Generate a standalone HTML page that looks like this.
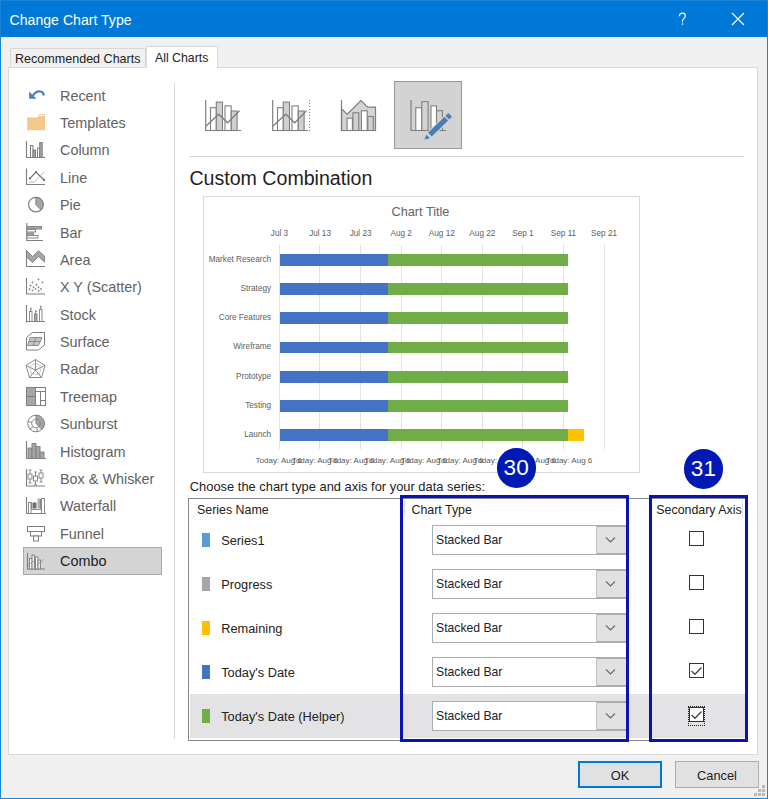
<!DOCTYPE html>
<html><head><meta charset="utf-8"><style>
html,body{margin:0;padding:0;}
body{width:768px;height:799px;position:relative;overflow:hidden;background:#f0f0f0;font-family:"Liberation Sans",sans-serif;}
.t{position:absolute;white-space:nowrap;}
.r{position:absolute;}
</style></head><body>
<div class="r" style="left:0px;top:0px;width:768px;height:37px;background:#0078d7"></div>
<div class="r" style="left:0px;top:0px;width:768px;height:1px;background:#1a84d9"></div>
<div class="r" style="left:0px;top:0px;width:1px;height:799px;background:#1a84d9"></div>
<div class="r" style="left:767px;top:0px;width:1px;height:799px;background:#1a84d9"></div>
<div class="r" style="left:0px;top:798px;width:768px;height:1px;background:#1a84d9"></div>
<span class="t" style="left:9.60px;top:12.66px;font-size:14.1px;line-height:14.1px;color:#ffffff;;transform-origin:0 11.94px;transform:scaleY(1.08);">Change Chart Type</span>
<svg class="r" style="left:0;top:0" width="768" height="37"><path d="M679.4 16.3C679.5 14.2 680.8 13.1 682.4 13.1C684.1 13.1 685.3 14.3 685.3 15.9C685.3 18.1 682.5 18.6 682.5 20.9V22.2" stroke="#fff" stroke-width="1.15" fill="none"/><rect x="681.8" y="23.3" width="1.4" height="1.4" fill="#fff"/></svg>
<svg class="r" style="left:731px;top:12px" width="14" height="14"><path d="M1 1L13 13M13 1L1 13" stroke="#fff" stroke-width="1.1"/></svg>
<div class="r" style="left:10px;top:48px;width:136px;height:20px;background:#f0f0f0;border:1px solid #d9d9d9;border-bottom:none;box-sizing:border-box"></div>
<span class="t" style="left:15.00px;top:52.98px;font-size:12.55px;line-height:12.55px;color:#222;;transform-origin:0 10.62px;transform:scaleY(1.07);">Recommended Charts</span>
<div class="r" style="left:146px;top:46px;width:72px;height:22px;background:#fff;border:1px solid #d9d9d9;border-bottom:none;box-sizing:border-box;z-index:2"></div>
<span class="t" style="left:155.00px;top:51.69px;font-size:12.3px;line-height:12.3px;color:#222;z-index:3;transform-origin:0 10.41px;transform:scaleY(1.07);">All Charts</span>
<div class="r" style="left:8px;top:67px;width:750px;height:688px;background:#fff;border:1px solid #d9d9d9;box-sizing:border-box"></div>
<div class="r" style="left:174px;top:83px;width:1px;height:656px;background:#dadada"></div>
<div class="r" style="left:23px;top:547px;width:139px;height:28px;background:#d4d4d4;border:1px solid #a9a9a9;box-sizing:border-box"></div>
<span class="t" style="left:60.00px;top:88.61px;font-size:14.4px;line-height:14.4px;color:#626262;;transform-origin:0 12.19px;transform:scaleY(1.07);">Recent</span>
<span class="t" style="left:60.00px;top:115.99px;font-size:14.4px;line-height:14.4px;color:#626262;;transform-origin:0 12.19px;transform:scaleY(1.07);">Templates</span>
<span class="t" style="left:60.00px;top:143.37px;font-size:14.4px;line-height:14.4px;color:#626262;;transform-origin:0 12.19px;transform:scaleY(1.07);">Column</span>
<span class="t" style="left:60.00px;top:170.75px;font-size:14.4px;line-height:14.4px;color:#626262;;transform-origin:0 12.19px;transform:scaleY(1.07);">Line</span>
<span class="t" style="left:60.00px;top:198.13px;font-size:14.4px;line-height:14.4px;color:#626262;;transform-origin:0 12.19px;transform:scaleY(1.07);">Pie</span>
<span class="t" style="left:60.00px;top:225.51px;font-size:14.4px;line-height:14.4px;color:#626262;;transform-origin:0 12.19px;transform:scaleY(1.07);">Bar</span>
<span class="t" style="left:60.00px;top:252.89px;font-size:14.4px;line-height:14.4px;color:#626262;;transform-origin:0 12.19px;transform:scaleY(1.07);">Area</span>
<span class="t" style="left:60.00px;top:280.27px;font-size:14.4px;line-height:14.4px;color:#626262;;transform-origin:0 12.19px;transform:scaleY(1.07);">X Y (Scatter)</span>
<span class="t" style="left:60.00px;top:307.65px;font-size:14.4px;line-height:14.4px;color:#626262;;transform-origin:0 12.19px;transform:scaleY(1.07);">Stock</span>
<span class="t" style="left:60.00px;top:335.03px;font-size:14.4px;line-height:14.4px;color:#626262;;transform-origin:0 12.19px;transform:scaleY(1.07);">Surface</span>
<span class="t" style="left:60.00px;top:362.41px;font-size:14.4px;line-height:14.4px;color:#626262;;transform-origin:0 12.19px;transform:scaleY(1.07);">Radar</span>
<span class="t" style="left:60.00px;top:389.79px;font-size:14.4px;line-height:14.4px;color:#626262;;transform-origin:0 12.19px;transform:scaleY(1.07);">Treemap</span>
<span class="t" style="left:60.00px;top:417.17px;font-size:14.4px;line-height:14.4px;color:#626262;;transform-origin:0 12.19px;transform:scaleY(1.07);">Sunburst</span>
<span class="t" style="left:60.00px;top:444.55px;font-size:14.4px;line-height:14.4px;color:#626262;;transform-origin:0 12.19px;transform:scaleY(1.07);">Histogram</span>
<span class="t" style="left:60.00px;top:471.93px;font-size:14.4px;line-height:14.4px;color:#626262;;transform-origin:0 12.19px;transform:scaleY(1.07);">Box &amp; Whisker</span>
<span class="t" style="left:60.00px;top:499.31px;font-size:14.4px;line-height:14.4px;color:#626262;;transform-origin:0 12.19px;transform:scaleY(1.07);">Waterfall</span>
<span class="t" style="left:60.00px;top:526.69px;font-size:14.4px;line-height:14.4px;color:#626262;;transform-origin:0 12.19px;transform:scaleY(1.07);">Funnel</span>
<span class="t" style="left:60.00px;top:554.07px;font-size:14.4px;line-height:14.4px;color:#222;;transform-origin:0 12.19px;transform:scaleY(1.07);">Combo</span>
<svg class="r" style="left:0;top:0;z-index:1" width="768" height="799"><path d="M32.5 96.5C34.5 92.5 38 91.2 40.5 91.5C42.5 91.8 43.6 93.5 43.8 95.5" stroke="#4a7ebb" stroke-width="2.2" fill="none"/><path d="M29.2 91.5L29.2 98.8L36.5 98.8Z" fill="#4a7ebb"/><path d="M27.2 117.5H37.5L39 114.3H45V130.2H27.2Z" fill="#f2c98a"/><path d="M38.5 115.6H44" stroke="#fff" stroke-width="1"/><path d="M26.5 141V158M26 157.5H45" stroke="#7f7f7f" stroke-width="1.1" fill="none"/><rect x="30.5" y="145.5" width="2.5" height="12" fill="#fff" stroke="#7f7f7f" stroke-width="1"/><rect x="33" y="150" width="2.5" height="7.5" fill="#a6a6a6" stroke="#7f7f7f" stroke-width="1"/><rect x="37.5" y="148" width="2.2" height="9.5" fill="#fff" stroke="#7f7f7f" stroke-width="1"/><rect x="39.7" y="142.5" width="2.5" height="15" fill="#a6a6a6" stroke="#7f7f7f" stroke-width="1"/><path d="M26.5 168.5V185M26 184.5H45" stroke="#7f7f7f" stroke-width="1.1" fill="none"/><path d="M30 178.3L36 172L44 180" stroke="#6f6f6f" stroke-width="1.2" fill="none"/><path d="M29.5 182L34.5 182L44 172" stroke="#b0b0b0" stroke-width="0.9" fill="none"/><rect x="29" y="177.3" width="2" height="2" fill="#6f6f6f"/><rect x="35" y="171" width="2" height="2" fill="#6f6f6f"/><rect x="43" y="179" width="2" height="2" fill="#6f6f6f"/><circle cx="35.9" cy="204.6" r="7.3" fill="#fff" stroke="#7f7f7f" stroke-width="1.2"/><path d="M35.9 204.6V197.3A7.3 7.3 0 0 1 41 209.8Z" fill="#a6a6a6" stroke="#7f7f7f" stroke-width="1"/><path d="M26.8 223V241M26.3 240.5H43" stroke="#7f7f7f" stroke-width="1.1" fill="none"/><rect x="27" y="226.5" width="14.5" height="2.5" fill="#a6a6a6" stroke="#7f7f7f" stroke-width="0.9"/><rect x="27" y="229.5" width="8.5" height="2.5" fill="#fff" stroke="#7f7f7f" stroke-width="0.9"/><rect x="27" y="233" width="6.5" height="2.5" fill="#a6a6a6" stroke="#7f7f7f" stroke-width="0.9"/><rect x="27" y="235.5" width="11" height="2.5" fill="#fff" stroke="#7f7f7f" stroke-width="0.9"/><path d="M26.5 250.5L32.5 256.5L38.5 250.8L44.5 256V262L38.5 256.5L32.5 262.5L26.5 257Z" fill="#a6a6a6" stroke="#7f7f7f" stroke-width="0.9"/><path d="M26.5 250V266.5M26 266.5H45" stroke="#7f7f7f" stroke-width="1.1" fill="none"/><path d="M26.5 278V294.5M26 294H45" stroke="#7f7f7f" stroke-width="1.1" fill="none"/><path d="M37.5 279.5H39.5M38.5 278.5V280.5" stroke="#8a8a8a" stroke-width="0.9"/><path d="M31.5 282.5H33.5M32.5 281.5V283.5" stroke="#8a8a8a" stroke-width="0.9"/><path d="M41.5 282.3H43.5M42.5 281.3V283.3" stroke="#8a8a8a" stroke-width="0.9"/><path d="M29.5 285.5H31.5M30.5 284.5V286.5" stroke="#8a8a8a" stroke-width="0.9"/><path d="M35.5 284.8H37.5M36.5 283.8V285.8" stroke="#8a8a8a" stroke-width="0.9"/><path d="M32.5 287.3H34.5M33.5 286.3V288.3" stroke="#8a8a8a" stroke-width="0.9"/><path d="M37.5 287.3H39.5M38.5 286.3V288.3" stroke="#8a8a8a" stroke-width="0.9"/><path d="M28.5 289.2H30.5M29.5 288.2V290.2" stroke="#8a8a8a" stroke-width="0.9"/><path d="M34.5 289H36.5M35.5 288V290" stroke="#8a8a8a" stroke-width="0.9"/><path d="M40 289H42M41 288V290" stroke="#8a8a8a" stroke-width="0.9"/><path d="M31.5 290.5H33.5M32.5 289.5V291.5" stroke="#8a8a8a" stroke-width="0.9"/><path d="M37.5 291H39.5M38.5 290V292" stroke="#8a8a8a" stroke-width="0.9"/><path d="M26.5 305V322.5M26 321.5H45" stroke="#7f7f7f" stroke-width="1.1" fill="none"/><rect x="29.5" y="311.5" width="2.5" height="10.0" fill="#fff" stroke="#7f7f7f" stroke-width="0.9"/><path d="M30.7 307.5V311.5M30.7 309.0H32.1" stroke="#7f7f7f" stroke-width="0.9"/><rect x="34.5" y="314" width="2.5" height="7.5" fill="#a6a6a6" stroke="#7f7f7f" stroke-width="0.9"/><path d="M35.7 310V314M35.7 311.5H37.1" stroke="#7f7f7f" stroke-width="0.9"/><rect x="39.5" y="309.5" width="2.5" height="12.0" fill="#fff" stroke="#7f7f7f" stroke-width="0.9"/><path d="M40.7 305.5V309.5M40.7 307.0H42.1" stroke="#7f7f7f" stroke-width="0.9"/><path d="M32.5 332.5H44.5V345L38.5 350H26.5V337.5Z" fill="#fff" stroke="#7f7f7f" stroke-width="1"/><path d="M30 337.5H42L38.5 345.5H27.5Z" fill="#c4c4c4" stroke="#7f7f7f" stroke-width="0.8"/><path d="M36 337.5L33 345.5M28.7 341.5H40.2" stroke="#7f7f7f" stroke-width="0.8"/><path d="M35.5 359.5L45 365.5L41.5 377.5H29.5L26 365.5Z" fill="none" stroke="#7f7f7f" stroke-width="0.9"/><path d="M35.5 359.5V370M35.5 370L45 365.5M35.5 370L41.5 377.5M35.5 370L29.5 377.5M35.5 370L26 365.5" stroke="#7f7f7f" stroke-width="0.9"/><path d="M35.5 363L41.5 366.5L39.5 374H31.5L29.5 366.5Z" fill="none" stroke="#b0b0b0" stroke-width="0.7"/><rect x="26.5" y="387.5" width="19" height="18" fill="#fff" stroke="#7f7f7f" stroke-width="1"/><rect x="26.5" y="387.5" width="9" height="18" fill="#a6a6a6" stroke="#7f7f7f" stroke-width="1"/><path d="M26.5 396.5H35.5M35.5 391.5H45.5M40.5 391.5V405.5M40.5 400.5H45.5" stroke="#7f7f7f" stroke-width="1"/><circle cx="36" cy="423.5" r="8.3" fill="#fff" stroke="#7f7f7f" stroke-width="1"/><path d="M36 415.2A8.3 8.3 0 0 1 41.8 429.4L36 423.5Z" fill="#a6a6a6" stroke="#7f7f7f" stroke-width="0.9"/><circle cx="36" cy="423.5" r="4.3" fill="none" stroke="#7f7f7f" stroke-width="0.9"/><path d="M28 421.5L32 422.5M30 429L33.5 426.5M37 431.8L37 427.5" stroke="#7f7f7f" stroke-width="0.9"/><path d="M26.5 441V459M26 458.5H46" stroke="#7f7f7f" stroke-width="1.1" fill="none"/><rect x="28" y="448" width="4" height="10.5" fill="#a6a6a6" stroke="#7f7f7f" stroke-width="0.9"/><rect x="32" y="443.5" width="4" height="15.0" fill="#a6a6a6" stroke="#7f7f7f" stroke-width="0.9"/><rect x="36" y="446.5" width="4" height="12.0" fill="#a6a6a6" stroke="#7f7f7f" stroke-width="0.9"/><rect x="40" y="452" width="4" height="6.5" fill="#a6a6a6" stroke="#7f7f7f" stroke-width="0.9"/><path d="M26.5 469V486.5M26 486H45" stroke="#7f7f7f" stroke-width="1.1" fill="none"/><path d="M30 470V483M28.5 470H31.5M28.5 483H31.5" stroke="#7f7f7f" stroke-width="0.9"/><rect x="28" y="474" width="4" height="5" fill="#fff" stroke="#7f7f7f" stroke-width="0.9"/><path d="M35.5 472V485M34.0 472H37.0M34.0 485H37.0" stroke="#7f7f7f" stroke-width="0.9"/><rect x="33.5" y="476" width="4" height="5" fill="#fff" stroke="#7f7f7f" stroke-width="0.9"/><path d="M41 470V482M39.5 470H42.5M39.5 482H42.5" stroke="#7f7f7f" stroke-width="0.9"/><rect x="39" y="473" width="4" height="5" fill="#fff" stroke="#7f7f7f" stroke-width="0.9"/><path d="M26.5 497V514M26 513.5H46" stroke="#7f7f7f" stroke-width="1.1" fill="none"/><rect x="28.5" y="502.5" width="2.5" height="11" fill="#fff" stroke="#7f7f7f" stroke-width="0.9"/><rect x="32.5" y="502.5" width="4" height="6" fill="#6e6e6e"/><rect x="37.5" y="498.5" width="3" height="10" fill="#b0b0b0"/><path d="M31.5 502.5V509.5H40.5V499" stroke="#7f7f7f" stroke-width="0.9" fill="none"/><rect x="41.5" y="498.5" width="3" height="15" fill="#fff" stroke="#7f7f7f" stroke-width="0.9"/><rect x="27.5" y="526.5" width="17" height="5" fill="#fff" stroke="#7f7f7f" stroke-width="1"/><rect x="30.5" y="531.5" width="11" height="4.5" fill="#fff" stroke="#7f7f7f" stroke-width="1"/><rect x="33.5" y="536" width="5" height="5" fill="#fff" stroke="#7f7f7f" stroke-width="1"/><path d="M27.5 553V569.5M27 569H45" stroke="#7f7f7f" stroke-width="1.1" fill="none"/><rect x="29.5" y="558.5" width="2.5" height="10.5" fill="#fff" stroke="#7f7f7f" stroke-width="0.9"/><rect x="32" y="555" width="2.5" height="14" fill="#e8e8e8" stroke="#7f7f7f" stroke-width="0.9"/><rect x="35.5" y="557" width="2.5" height="12" fill="#fff" stroke="#7f7f7f" stroke-width="0.9"/><rect x="38" y="560" width="2.5" height="9" fill="#e8e8e8" stroke="#7f7f7f" stroke-width="0.9"/><path d="M28 566L33 561L37 565L44.5 559" stroke="#7f7f7f" stroke-width="0.9" fill="none" stroke-dasharray="1.5 1"/></svg>
<div class="r" style="left:394px;top:81px;width:68px;height:68px;background:#d3d3d3;border:1px solid #999;box-sizing:border-box"></div>
<svg class="r" style="left:0;top:0;z-index:1" width="768" height="799"><path d="M205.7 100V131M205.2 130.5H241.2" stroke="#7f7f7f" stroke-width="1.2" fill="none"/><rect x="210.5" y="107.7" width="5.8" height="22.799999999999997" fill="#fff" stroke="#7f7f7f" stroke-width="1.1"/><rect x="216.29999999999998" y="102.1" width="6.2" height="28.400000000000006" fill="#d0d0d0" stroke="#7f7f7f" stroke-width="1.1"/><rect x="225.0" y="105.9" width="6.2" height="24.599999999999994" fill="#fff" stroke="#7f7f7f" stroke-width="1.1"/><rect x="231.29999999999998" y="111.0" width="5.8" height="19.5" fill="#d0d0d0" stroke="#7f7f7f" stroke-width="1.1"/><path d="M205.2 126.7L218.79999999999998 114.2L227.7 122.8L239.5 110.7" stroke="#7f7f7f" stroke-width="1.3" fill="none"/><path d="M272.7 100V131M272.2 130.5H308.2" stroke="#7f7f7f" stroke-width="1.2" fill="none"/><rect x="277.5" y="107.7" width="5.8" height="22.799999999999997" fill="#fff" stroke="#7f7f7f" stroke-width="1.1"/><rect x="283.3" y="102.1" width="6.2" height="28.400000000000006" fill="#d0d0d0" stroke="#7f7f7f" stroke-width="1.1"/><rect x="292.0" y="105.9" width="6.2" height="24.599999999999994" fill="#fff" stroke="#7f7f7f" stroke-width="1.1"/><rect x="298.3" y="111.0" width="5.8" height="19.5" fill="#d0d0d0" stroke="#7f7f7f" stroke-width="1.1"/><path d="M272.2 126.7L285.8 114.2L294.7 122.8L306.5 110.7" stroke="#7f7f7f" stroke-width="1.3" fill="none"/><path d="M309.59999999999997 100V131" stroke="#7f7f7f" stroke-width="1" stroke-dasharray="1 2" fill="none"/><path d="M341.5 108.75L347.3 114.2L360.9 100.5L367.7 107.2L375.5 107.2L375.5 130.5L341.5 130.5Z" fill="#d4d4d4" stroke="#7f7f7f" stroke-width="1.2"/><path d="M341.5 100V131M341 130.5H376" stroke="#7f7f7f" stroke-width="1.2" fill="none"/><rect x="347.1" y="118.2" width="5.3" height="12.299999999999997" fill="#fff" stroke="#7f7f7f" stroke-width="1.1"/><rect x="352.9" y="112.8" width="5.9" height="17.700000000000003" fill="#d0d0d0" stroke="#7f7f7f" stroke-width="1.1"/><rect x="361.4" y="110.8" width="5.8" height="19.700000000000003" fill="#fff" stroke="#7f7f7f" stroke-width="1.1"/><rect x="367.8" y="116.5" width="5.5" height="14" fill="#d0d0d0" stroke="#7f7f7f" stroke-width="1.1"/><path d="M411 100V131M410.5 130.5H446" stroke="#7f7f7f" stroke-width="1.2" fill="none"/><rect x="415.8" y="107.75" width="6" height="22.75" fill="#fff" stroke="#7f7f7f" stroke-width="1.1"/><rect x="421.8" y="101.7" width="6.3" height="28.799999999999997" fill="#d3d3d3" stroke="#7f7f7f" stroke-width="1.1"/><rect x="431.0" y="105.9" width="5.5" height="24.599999999999994" fill="#fff" stroke="#7f7f7f" stroke-width="1.1"/><rect x="436.5" y="110.7" width="5.9" height="19.799999999999997" fill="#d3d3d3" stroke="#7f7f7f" stroke-width="1.1"/><path d="M429.9 134.6L446.35 118.7" stroke="#d3d3d3" stroke-width="7.5" fill="none"/><path d="M429.9 134.6L446.35 118.7" stroke="#4a7ebb" stroke-width="5.2" fill="none"/><path d="M447.3 117.6L450.2 114.8" stroke="#4a7ebb" stroke-width="5.2" fill="none"/><path d="M426.3 134.6L429.9 138.2L424.6 139.6Z" fill="#4a7ebb"/></svg>
<div class="r" style="left:190px;top:156px;width:554px;height:1px;background:#d3d3d3"></div>
<span class="t" style="left:189.40px;top:168.91px;font-size:19.6px;line-height:19.6px;color:#222;;">Custom Combination</span>
<div class="r" style="left:203px;top:196px;width:437px;height:277px;background:#fff;border:1px solid #d9d9d9;box-sizing:border-box"></div>
<span class="t" style="left:420.50px;top:206.35px;font-size:12.7px;line-height:12.7px;color:#646464;;transform:translateX(-50%);">Chart Title</span>
<div class="r" style="left:279px;top:245px;width:1px;height:204px;background:#e2e2e2"></div>
<span class="t" style="left:279.50px;top:230.46px;font-size:8.2px;line-height:8.2px;color:#5e5e5e;;transform:translateX(-50%);">Jul 3</span>
<div class="r" style="left:319px;top:245px;width:1px;height:204px;background:#e2e2e2"></div>
<span class="t" style="left:320.07px;top:230.46px;font-size:8.2px;line-height:8.2px;color:#5e5e5e;;transform:translateX(-50%);">Jul 13</span>
<div class="r" style="left:360px;top:245px;width:1px;height:204px;background:#e2e2e2"></div>
<span class="t" style="left:360.64px;top:230.46px;font-size:8.2px;line-height:8.2px;color:#5e5e5e;;transform:translateX(-50%);">Jul 23</span>
<div class="r" style="left:401px;top:245px;width:1px;height:204px;background:#e2e2e2"></div>
<span class="t" style="left:401.21px;top:230.46px;font-size:8.2px;line-height:8.2px;color:#5e5e5e;;transform:translateX(-50%);">Aug 2</span>
<div class="r" style="left:441px;top:245px;width:1px;height:204px;background:#e2e2e2"></div>
<span class="t" style="left:441.78px;top:230.46px;font-size:8.2px;line-height:8.2px;color:#5e5e5e;;transform:translateX(-50%);">Aug 12</span>
<div class="r" style="left:482px;top:245px;width:1px;height:204px;background:#e2e2e2"></div>
<span class="t" style="left:482.35px;top:230.46px;font-size:8.2px;line-height:8.2px;color:#5e5e5e;;transform:translateX(-50%);">Aug 22</span>
<div class="r" style="left:522px;top:245px;width:1px;height:204px;background:#e2e2e2"></div>
<span class="t" style="left:522.92px;top:230.46px;font-size:8.2px;line-height:8.2px;color:#5e5e5e;;transform:translateX(-50%);">Sep 1</span>
<div class="r" style="left:563px;top:245px;width:1px;height:204px;background:#e2e2e2"></div>
<span class="t" style="left:563.49px;top:230.46px;font-size:8.2px;line-height:8.2px;color:#5e5e5e;;transform:translateX(-50%);">Sep 11</span>
<div class="r" style="left:604px;top:245px;width:1px;height:204px;background:#e2e2e2"></div>
<span class="t" style="left:604.06px;top:230.46px;font-size:8.2px;line-height:8.2px;color:#5e5e5e;;transform:translateX(-50%);">Sep 21</span>
<div class="r" style="left:280px;top:253.8px;width:108px;height:11.8px;background:#4472c4"></div>
<div class="r" style="left:388px;top:253.8px;width:180px;height:11.8px;background:#70ad47"></div>
<span class="t" style="left:271.10px;top:255.66px;font-size:8.2px;line-height:8.2px;color:#5e5e5e;;transform:translateX(-100%);">Market Research</span>
<div class="r" style="left:280px;top:283.1px;width:108px;height:11.8px;background:#4472c4"></div>
<div class="r" style="left:388px;top:283.1px;width:180px;height:11.8px;background:#70ad47"></div>
<span class="t" style="left:271.10px;top:284.91px;font-size:8.2px;line-height:8.2px;color:#5e5e5e;;transform:translateX(-100%);">Strategy</span>
<div class="r" style="left:280px;top:312.3px;width:108px;height:11.8px;background:#4472c4"></div>
<div class="r" style="left:388px;top:312.3px;width:180px;height:11.8px;background:#70ad47"></div>
<span class="t" style="left:271.10px;top:314.16px;font-size:8.2px;line-height:8.2px;color:#5e5e5e;;transform:translateX(-100%);">Core Features</span>
<div class="r" style="left:280px;top:341.6px;width:108px;height:11.8px;background:#4472c4"></div>
<div class="r" style="left:388px;top:341.6px;width:180px;height:11.8px;background:#70ad47"></div>
<span class="t" style="left:271.10px;top:343.41px;font-size:8.2px;line-height:8.2px;color:#5e5e5e;;transform:translateX(-100%);">Wireframe</span>
<div class="r" style="left:280px;top:370.8px;width:108px;height:11.8px;background:#4472c4"></div>
<div class="r" style="left:388px;top:370.8px;width:180px;height:11.8px;background:#70ad47"></div>
<span class="t" style="left:271.10px;top:372.66px;font-size:8.2px;line-height:8.2px;color:#5e5e5e;;transform:translateX(-100%);">Prototype</span>
<div class="r" style="left:280px;top:400.1px;width:108px;height:11.8px;background:#4472c4"></div>
<div class="r" style="left:388px;top:400.1px;width:180px;height:11.8px;background:#70ad47"></div>
<span class="t" style="left:271.10px;top:401.91px;font-size:8.2px;line-height:8.2px;color:#5e5e5e;;transform:translateX(-100%);">Testing</span>
<div class="r" style="left:280px;top:429.3px;width:108px;height:11.8px;background:#4472c4"></div>
<div class="r" style="left:388px;top:429.3px;width:180px;height:11.8px;background:#70ad47"></div>
<span class="t" style="left:271.10px;top:431.16px;font-size:8.2px;line-height:8.2px;color:#5e5e5e;;transform:translateX(-100%);">Launch</span>
<div class="r" style="left:568px;top:429.3px;width:16px;height:11.8px;background:#ffc000"></div>
<span class="t" style="left:255.60px;top:456.63px;font-size:8px;line-height:8px;color:#595959;;">Today: Aug 6</span>
<span class="t" style="left:291.90px;top:456.63px;font-size:8px;line-height:8px;color:#595959;;">Today: Aug 6</span>
<span class="t" style="left:328.20px;top:456.63px;font-size:8px;line-height:8px;color:#595959;;">Today: Aug 6</span>
<span class="t" style="left:364.50px;top:456.63px;font-size:8px;line-height:8px;color:#595959;;">Today: Aug 6</span>
<span class="t" style="left:400.80px;top:456.63px;font-size:8px;line-height:8px;color:#595959;;">Today: Aug 6</span>
<span class="t" style="left:437.10px;top:456.63px;font-size:8px;line-height:8px;color:#595959;;">Today: Aug 6</span>
<span class="t" style="left:473.40px;top:456.63px;font-size:8px;line-height:8px;color:#595959;;">Today: Aug 6</span>
<span class="t" style="left:509.70px;top:456.63px;font-size:8px;line-height:8px;color:#595959;;">Today: Aug 6</span>
<span class="t" style="left:546.00px;top:456.63px;font-size:8px;line-height:8px;color:#595959;;">Today: Aug 6</span>
<span class="t" style="left:189.80px;top:481.38px;font-size:12.9px;line-height:12.9px;color:#222;;">Choose the chart type and axis for your data series:</span>
<div class="r" style="left:188px;top:498px;width:558px;height:243px;background:#fff;border:1px solid #828790;box-sizing:border-box"></div>
<div class="r" style="left:190px;top:694px;width:556px;height:44px;background:#e3e3e5"></div>
<span class="t" style="left:197.00px;top:503.60px;font-size:12.4px;line-height:12.4px;color:#222;;transform-origin:0 10.50px;transform:scaleY(1.1);">Series Name</span>
<span class="t" style="left:411.50px;top:503.60px;font-size:12.4px;line-height:12.4px;color:#222;;transform-origin:0 10.50px;transform:scaleY(1.1);">Chart Type</span>
<span class="t" style="left:656.30px;top:503.60px;font-size:12.4px;line-height:12.4px;color:#222;;transform-origin:0 10.50px;transform:scaleY(1.1);">Secondary Axis</span>
<div class="r" style="left:404px;top:500px;width:1px;height:17px;background:#e5e5e5"></div>
<div class="r" style="left:742px;top:500px;width:1px;height:17px;background:#e5e5e5"></div>
<div class="r" style="left:202px;top:533px;width:8px;height:14px;background:#5b9bd5"></div>
<span class="t" style="left:221.20px;top:534.76px;font-size:12.8px;line-height:12.8px;color:#222;;transform-origin:0 10.84px;transform:scaleY(1.07);">Series1</span>
<div class="r" style="left:432px;top:525px;width:196px;height:30px;background:#fff;border:1px solid #adadad;box-sizing:border-box"></div>
<div class="r" style="left:596px;top:525px;width:31px;height:30px;background:#e1e1e1;border-top:2px solid #acacac;border-bottom:2px solid #acacac;border-left:1px solid #c2c2c2;box-sizing:border-box"></div>
<svg class="r" style="left:605px;top:536px" width="11" height="8"><path d="M1 1.5L5.5 6L10 1.5" stroke="#6a6a6a" stroke-width="1.15" fill="none"/></svg>
<span class="t" style="left:436.00px;top:534.07px;font-size:12.2px;line-height:12.2px;color:#222;;transform-origin:0 10.33px;transform:scaleY(1.06);">Stacked Bar</span>
<div class="r" style="left:689px;top:531px;width:15px;height:15px;background:#fff;border:1px solid #333;box-sizing:border-box"></div>
<div class="r" style="left:202px;top:577px;width:8px;height:14px;background:#a5a5a5"></div>
<span class="t" style="left:221.20px;top:578.76px;font-size:12.8px;line-height:12.8px;color:#222;;transform-origin:0 10.84px;transform:scaleY(1.07);">Progress</span>
<div class="r" style="left:432px;top:569px;width:196px;height:30px;background:#fff;border:1px solid #adadad;box-sizing:border-box"></div>
<div class="r" style="left:596px;top:569px;width:31px;height:30px;background:#e1e1e1;border-top:2px solid #acacac;border-bottom:2px solid #acacac;border-left:1px solid #c2c2c2;box-sizing:border-box"></div>
<svg class="r" style="left:605px;top:580px" width="11" height="8"><path d="M1 1.5L5.5 6L10 1.5" stroke="#6a6a6a" stroke-width="1.15" fill="none"/></svg>
<span class="t" style="left:436.00px;top:578.07px;font-size:12.2px;line-height:12.2px;color:#222;;transform-origin:0 10.33px;transform:scaleY(1.06);">Stacked Bar</span>
<div class="r" style="left:689px;top:575px;width:15px;height:15px;background:#fff;border:1px solid #333;box-sizing:border-box"></div>
<div class="r" style="left:202px;top:621px;width:8px;height:14px;background:#ffc000"></div>
<span class="t" style="left:221.20px;top:622.76px;font-size:12.8px;line-height:12.8px;color:#222;;transform-origin:0 10.84px;transform:scaleY(1.07);">Remaining</span>
<div class="r" style="left:432px;top:613px;width:196px;height:30px;background:#fff;border:1px solid #adadad;box-sizing:border-box"></div>
<div class="r" style="left:596px;top:613px;width:31px;height:30px;background:#e1e1e1;border-top:2px solid #acacac;border-bottom:2px solid #acacac;border-left:1px solid #c2c2c2;box-sizing:border-box"></div>
<svg class="r" style="left:605px;top:624px" width="11" height="8"><path d="M1 1.5L5.5 6L10 1.5" stroke="#6a6a6a" stroke-width="1.15" fill="none"/></svg>
<span class="t" style="left:436.00px;top:622.07px;font-size:12.2px;line-height:12.2px;color:#222;;transform-origin:0 10.33px;transform:scaleY(1.06);">Stacked Bar</span>
<div class="r" style="left:689px;top:619px;width:15px;height:15px;background:#fff;border:1px solid #333;box-sizing:border-box"></div>
<div class="r" style="left:202px;top:665px;width:8px;height:14px;background:#4472c4"></div>
<span class="t" style="left:221.20px;top:666.76px;font-size:12.8px;line-height:12.8px;color:#222;;transform-origin:0 10.84px;transform:scaleY(1.07);">Today's Date</span>
<div class="r" style="left:432px;top:657px;width:196px;height:30px;background:#fff;border:1px solid #adadad;box-sizing:border-box"></div>
<div class="r" style="left:596px;top:657px;width:31px;height:30px;background:#e1e1e1;border-top:2px solid #acacac;border-bottom:2px solid #acacac;border-left:1px solid #c2c2c2;box-sizing:border-box"></div>
<svg class="r" style="left:605px;top:668px" width="11" height="8"><path d="M1 1.5L5.5 6L10 1.5" stroke="#6a6a6a" stroke-width="1.15" fill="none"/></svg>
<span class="t" style="left:436.00px;top:666.07px;font-size:12.2px;line-height:12.2px;color:#222;;transform-origin:0 10.33px;transform:scaleY(1.06);">Stacked Bar</span>
<div class="r" style="left:689px;top:663px;width:15px;height:15px;background:#fff;border:1px solid #333;box-sizing:border-box"></div>
<svg class="r" style="left:689px;top:663px" width="15" height="15"><path d="M2.5 8L6 11.3L12.5 4.5" stroke="#444" stroke-width="1.3" fill="none"/></svg>
<div class="r" style="left:202px;top:709px;width:8px;height:14px;background:#70ad47"></div>
<span class="t" style="left:221.20px;top:710.76px;font-size:12.8px;line-height:12.8px;color:#222;;transform-origin:0 10.84px;transform:scaleY(1.07);">Today's Date (Helper)</span>
<div class="r" style="left:432px;top:701px;width:196px;height:30px;background:#fff;border:1px solid #adadad;box-sizing:border-box"></div>
<div class="r" style="left:596px;top:701px;width:31px;height:30px;background:#e1e1e1;border-top:2px solid #acacac;border-bottom:2px solid #acacac;border-left:1px solid #c2c2c2;box-sizing:border-box"></div>
<svg class="r" style="left:605px;top:712px" width="11" height="8"><path d="M1 1.5L5.5 6L10 1.5" stroke="#6a6a6a" stroke-width="1.15" fill="none"/></svg>
<span class="t" style="left:436.00px;top:710.07px;font-size:12.2px;line-height:12.2px;color:#222;;transform-origin:0 10.33px;transform:scaleY(1.06);">Stacked Bar</span>
<div class="r" style="left:689px;top:707px;width:15px;height:15px;background:#fff;border:1px solid #333;box-sizing:border-box"></div>
<svg class="r" style="left:689px;top:707px" width="15" height="15"><path d="M2.5 8L6 11.3L12.5 4.5" stroke="#444" stroke-width="1.3" fill="none"/></svg>
<div class="r" style="left:688px;top:706px;width:17px;height:20px;border:1px dotted #222;box-sizing:border-box"></div>
<div class="r" style="left:400px;top:495px;width:229px;height:247px;border:3px solid #0a14b4;box-sizing:border-box;z-index:5"></div>
<div class="r" style="left:649px;top:495px;width:99px;height:247px;border:3px solid #0a14b4;box-sizing:border-box;z-index:5"></div>
<div class="r" style="left:496.5px;top:448px;width:39.5px;height:39.5px;background:#0019b4;border-radius:50%;z-index:6"></div>
<span class="t" style="left:516.20px;top:457.07px;font-size:22.6px;line-height:22.6px;color:#fff;z-index:7;transform:translateX(-50%);">30</span>
<div class="r" style="left:683.7px;top:449.3px;width:39.5px;height:39.5px;background:#0019b4;border-radius:50%;z-index:6"></div>
<span class="t" style="left:703.40px;top:458.27px;font-size:22.6px;line-height:22.6px;color:#fff;z-index:7;transform:translateX(-50%);">31</span>
<div class="r" style="left:762px;top:785px;width:3px;height:3px;background:#b8b8b8"></div>
<div class="r" style="left:758px;top:789px;width:3px;height:3px;background:#b8b8b8"></div>
<div class="r" style="left:762px;top:789px;width:3px;height:3px;background:#b8b8b8"></div>
<div class="r" style="left:754px;top:793px;width:3px;height:3px;background:#b8b8b8"></div>
<div class="r" style="left:758px;top:793px;width:3px;height:3px;background:#b8b8b8"></div>
<div class="r" style="left:762px;top:793px;width:3px;height:3px;background:#b8b8b8"></div>
<div class="r" style="left:578px;top:761px;width:84px;height:27px;background:#e1e1e1;border:2px solid #0078d7;box-sizing:border-box"></div>
<span class="t" style="left:620.00px;top:769.66px;font-size:12.8px;line-height:12.8px;color:#222;;transform:translateX(-50%);">OK</span>
<div class="r" style="left:675px;top:761px;width:84px;height:27px;background:#e1e1e1;border:1px solid #adadad;box-sizing:border-box"></div>
<span class="t" style="left:717.00px;top:769.66px;font-size:12.8px;line-height:12.8px;color:#222;;transform:translateX(-50%);">Cancel</span>

</body></html>
